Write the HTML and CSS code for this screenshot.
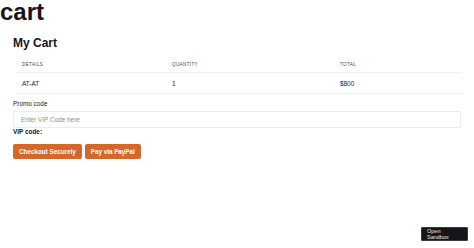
FILE: index.html
```html
<!DOCTYPE html>
<html>
<head>
<meta charset="utf-8">
<link rel="stylesheet" href="styles.css">
</head>
<body>
<h1 class="app-title">cart</h1>
<main class="cart">
  <h2 class="cart-title">My Cart</h2>
  <table class="cart-table">
    <thead>
      <tr>
        <th class="col-details">Details</th>
        <th class="col-qty">Quantity</th>
        <th class="col-total">Total</th>
      </tr>
    </thead>
    <tbody>
      <tr>
        <td>AT-AT</td>
        <td>1</td>
        <td>$800</td>
      </tr>
    </tbody>
  </table>
  <label class="promo-label" for="promo">Promo code</label>
  <input class="promo-input" id="promo" type="text" placeholder="Enter VIP Code here">
  <div class="vip">VIP code:</div>
  <div class="actions">
    <button class="btn">Checkout Securely</button>
    <button class="btn">Pay via PayPal</button>
  </div>
</main>
<div class="sandbox">Open<br>Sandbox</div>
</body>
</html>
```
FILE: styles.css
```css
html, body {
  margin: 0;
  padding: 0;
  background: #fff;
  font-family: "Liberation Sans", Arial, sans-serif;
  color: #1f1f24;
}
.app-title {
  margin: 0;
  font-size: 24px;
  line-height: 23px;
  font-weight: 700;
  color: #15151a;
}
.cart {
  padding: 0 13px;
  display: flex;
  flex-direction: column;
  align-items: flex-start;
}
.cart-title {
  margin: 14px 0 0 0;
  font-size: 12px;
  line-height: 12px;
  font-weight: 700;
  color: #15151a;
}
.cart-table {
  margin: 7px 0 0 3px;
  width: 446px;
  table-layout: fixed;
  border-collapse: collapse;
  font-size: 6.4px;
  color: #222228;
}
.cart-table th {
  text-align: left;
  font-weight: 400;
  font-size: 4.6px;
  letter-spacing: 0.35px;
  text-transform: uppercase;
  color: #4a4a50;
  height: 16px;
  padding: 0 0 0 6px;
  border-bottom: 1px solid #f0f0f0;
  vertical-align: middle;
}
.cart-table td {
  height: 20px;
  padding: 0 0 0 6px;
  border-bottom: 1px solid #f0f0f0;
  vertical-align: middle;
}
.col-details { width: 144px; }
.col-qty { width: 162px; }
.col-total { width: 122px; }
.promo-label {
  margin-top: 6px;
  font-size: 6.4px;
  line-height: 8px;
  color: #222228;
}
.promo-input {
  box-sizing: border-box;
  margin: 3px 0 0 0;
  width: 448px;
  height: 17px;
  padding: 0 7px;
  border: 1px solid #ececec;
  border-radius: 2px;
  font-family: inherit;
  font-size: 6.4px;
  color: #333;
  outline: none;
}
.promo-input::placeholder { color: #8f8f8f; }
.vip {
  font-size: 6.4px;
  line-height: 8px;
  font-weight: 700;
  color: #15151a;
}
.actions {
  margin-top: 7.5px;
  display: flex;
  gap: 3px;
}
.btn {
  height: 15.5px;
  padding: 0 6px;
  border: none;
  border-radius: 2px;
  background: #d4672a;
  color: #fff;
  font-family: inherit;
  font-size: 6.3px;
  font-weight: 700;
}
.sandbox {
  position: fixed;
  left: 421px;
  top: 227px;
  width: 47px;
  height: 14px;
  box-sizing: border-box;
  padding: 1px 5px;
  background: #16161a;
  border: 1px solid #3a3a3a;
  border-radius: 1px;
  color: #e6e6e6;
  font-size: 5.5px;
  line-height: 5.6px;
}
```
